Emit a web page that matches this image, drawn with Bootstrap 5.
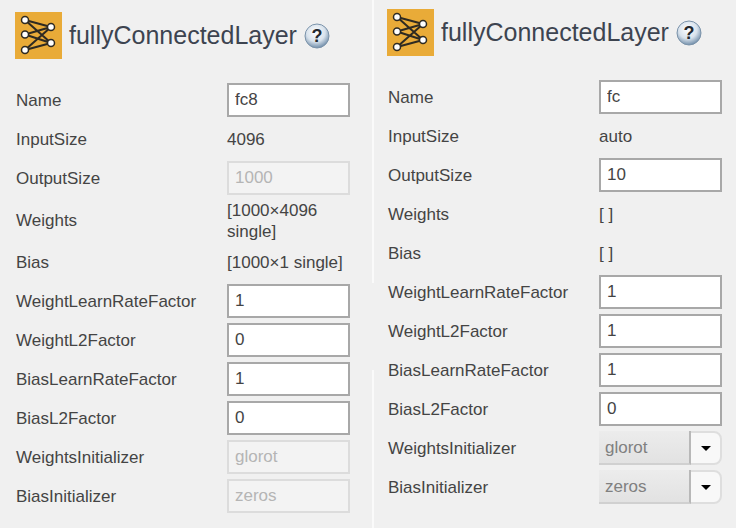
<!DOCTYPE html>
<html lang="en">
<head>
    <meta charset="UTF-8">
    <meta name="viewport" content="width=device-width, initial-scale=1.0">
    <title>fullyConnectedLayer</title>
    <link href="https://cdn.jsdelivr.net/npm/bootstrap@5.3.0/dist/css/bootstrap.min.css" rel="stylesheet">
    <style>
        body {
            background-color: #f0f0f0;
            color: #444;
            font-family: "Liberation Sans", Arial, sans-serif;
            font-size: 17px;
            width: 736px;
            height: 528px;
            overflow: hidden;
        }

        .left-panel {
            width: 372px;
            padding: 12px 22px 0 15px;
        }

        .right-panel {
            width: 362px;
            padding: 9px 14px 0 13px;
        }

        .divider {
            width: 2px;
            height: 528px;
        }

        .seg-top {
            height: 283px;
            background-color: #fafafa;
        }

        .seg-bottom {
            height: 158px;
            margin-top: 87px;
            background-color: #fafafa;
        }

        .head-row {
            height: 47px;
            margin-bottom: 22px;
        }

        .layer-title {
            font-size: 25px;
            line-height: 47px;
            margin-left: 7px;
            color: #3d4450;
        }

        .help-icon {
            margin-left: 7px;
        }

        .prop-row {
            height: 39px;
            padding-left: 1px;
        }

        .prop-row.tall {
            height: 45px;
        }

        .prop-label {
            width: 211px;
            flex: none;
        }

        .prop-value {
            line-height: 21px;
            width: 123px;
        }

        .form-control.prop-input {
            width: 123px;
            height: 34px;
            margin-bottom: 1px;
            padding: 0 6px;
            font-size: 17px;
            color: #444;
            background-color: #fff;
            border: 2px solid #a8a8a8;
            border-radius: 0;
        }

        .form-control.prop-input:disabled {
            color: #b5b5b5;
            background-color: #f3f3f3;
            border-color: #dcdcdc;
        }

        .drop-box {
            width: 123px;
            height: 34px;
            margin-bottom: 1px;
            border: 2px solid #dedede;
            border-radius: 0 8px 8px 0;
            background-color: #f8f8f8;
        }

        .drop-value {
            width: 92px;
            height: 34px;
            margin: -2px 0 -2px -2px;
            padding-left: 6px;
            line-height: 33px;
            color: #808080;
            background: linear-gradient(#ececec, #e2e2e2);
            border-right: 2px solid #b8b8b8;
            border-bottom: 2px solid #d0d0d0;
        }

        .drop-caret {
            width: 0;
            height: 0;
            margin-left: 10px;
            border-left: 5px solid transparent;
            border-right: 5px solid transparent;
            border-top: 5px solid #000;
        }
    </style>
</head>

<body>
    <svg width="0" height="0" class="d-block">
        <defs>
            <radialGradient id="helpFill" cx="45%" cy="35%" r="70%">
                <stop offset="0" stop-color="#ffffff" />
                <stop offset="0.55" stop-color="#d8e2ec" />
                <stop offset="1" stop-color="#5f7f9e" />
            </radialGradient>
            <symbol id="layerIcon" viewBox="0 0 47 47">
                <rect width="47" height="47" fill="#e9ab38" />
                <path d="M10 8L36 15M10 8L36 31M10 22.500L36 15M10 22.500L36 31M10 38L36 15M10 38L36 31" stroke="#2e2a22" stroke-width="2" fill="none" />
                <g fill="#fff" stroke="#2e2a22" stroke-width="1.500">
                    <circle cx="10" cy="8" r="3.500" />
                    <circle cx="10" cy="22.500" r="3.500" />
                    <circle cx="10" cy="38" r="3.500" />
                    <circle cx="36" cy="15" r="3.500" />
                    <circle cx="36" cy="31" r="3.500" />
                </g>
            </symbol>
            <symbol id="helpIcon" viewBox="0 0 26 26">
                <circle cx="13" cy="13" r="12" fill="url(#helpFill)" stroke="#7b93aa" />
                <text x="13" y="19" text-anchor="middle" font-family="Liberation Sans" font-size="18" font-weight="700" fill="#23282e">?</text>
            </symbol>
        </defs>
    </svg>

    <div class="d-flex">
        <div class="left-panel">
            <div class="d-flex align-items-center head-row">
                <svg width="47" height="47"><use href="#layerIcon" /></svg>
                <span class="layer-title">fullyConnectedLayer</span>
                <svg class="help-icon" width="26" height="26"><use href="#helpIcon" /></svg>
            </div>
            <div class="d-flex align-items-center prop-row"><span class="prop-label">Name</span><input class="form-control prop-input" value="fc8"></div>
            <div class="d-flex align-items-center prop-row"><span class="prop-label">InputSize</span><span class="prop-value">4096</span></div>
            <div class="d-flex align-items-center prop-row"><span class="prop-label">OutputSize</span><input class="form-control prop-input" value="1000" disabled></div>
            <div class="d-flex align-items-center prop-row tall"><span class="prop-label">Weights</span><span class="prop-value">[1000×4096 single]</span></div>
            <div class="d-flex align-items-center prop-row"><span class="prop-label">Bias</span><span class="prop-value text-nowrap">[1000×1 single]</span></div>
            <div class="d-flex align-items-center prop-row"><span class="prop-label">WeightLearnRateFactor</span><input class="form-control prop-input" value="1"></div>
            <div class="d-flex align-items-center prop-row"><span class="prop-label">WeightL2Factor</span><input class="form-control prop-input" value="0"></div>
            <div class="d-flex align-items-center prop-row"><span class="prop-label">BiasLearnRateFactor</span><input class="form-control prop-input" value="1"></div>
            <div class="d-flex align-items-center prop-row"><span class="prop-label">BiasL2Factor</span><input class="form-control prop-input" value="0"></div>
            <div class="d-flex align-items-center prop-row"><span class="prop-label">WeightsInitializer</span><input class="form-control prop-input" value="glorot" disabled></div>
            <div class="d-flex align-items-center prop-row"><span class="prop-label">BiasInitializer</span><input class="form-control prop-input" value="zeros" disabled></div>
        </div>

        <div class="divider">
            <div class="seg-top"></div>
            <div class="seg-bottom"></div>
        </div>

        <div class="right-panel">
            <div class="d-flex align-items-center head-row">
                <svg width="47" height="47"><use href="#layerIcon" /></svg>
                <span class="layer-title">fullyConnectedLayer</span>
                <svg class="help-icon" width="26" height="26"><use href="#helpIcon" /></svg>
            </div>
            <div class="d-flex align-items-center prop-row"><span class="prop-label">Name</span><input class="form-control prop-input" value="fc"></div>
            <div class="d-flex align-items-center prop-row"><span class="prop-label">InputSize</span><span class="prop-value">auto</span></div>
            <div class="d-flex align-items-center prop-row"><span class="prop-label">OutputSize</span><input class="form-control prop-input" value="10"></div>
            <div class="d-flex align-items-center prop-row"><span class="prop-label">Weights</span><span class="prop-value">[ ]</span></div>
            <div class="d-flex align-items-center prop-row"><span class="prop-label">Bias</span><span class="prop-value">[ ]</span></div>
            <div class="d-flex align-items-center prop-row"><span class="prop-label">WeightLearnRateFactor</span><input class="form-control prop-input" value="1"></div>
            <div class="d-flex align-items-center prop-row"><span class="prop-label">WeightL2Factor</span><input class="form-control prop-input" value="1"></div>
            <div class="d-flex align-items-center prop-row"><span class="prop-label">BiasLearnRateFactor</span><input class="form-control prop-input" value="1"></div>
            <div class="d-flex align-items-center prop-row"><span class="prop-label">BiasL2Factor</span><input class="form-control prop-input" value="0"></div>
            <div class="d-flex align-items-center prop-row"><span class="prop-label">WeightsInitializer</span><div class="d-flex align-items-center drop-box"><span class="drop-value">glorot</span><span class="drop-caret"></span></div></div>
            <div class="d-flex align-items-center prop-row"><span class="prop-label">BiasInitializer</span><div class="d-flex align-items-center drop-box"><span class="drop-value">zeros</span><span class="drop-caret"></span></div></div>
        </div>
    </div>

    <script src="https://cdn.jsdelivr.net/npm/bootstrap@5.3.0/dist/js/bootstrap.bundle.min.js"></script>
</body>

</html>
